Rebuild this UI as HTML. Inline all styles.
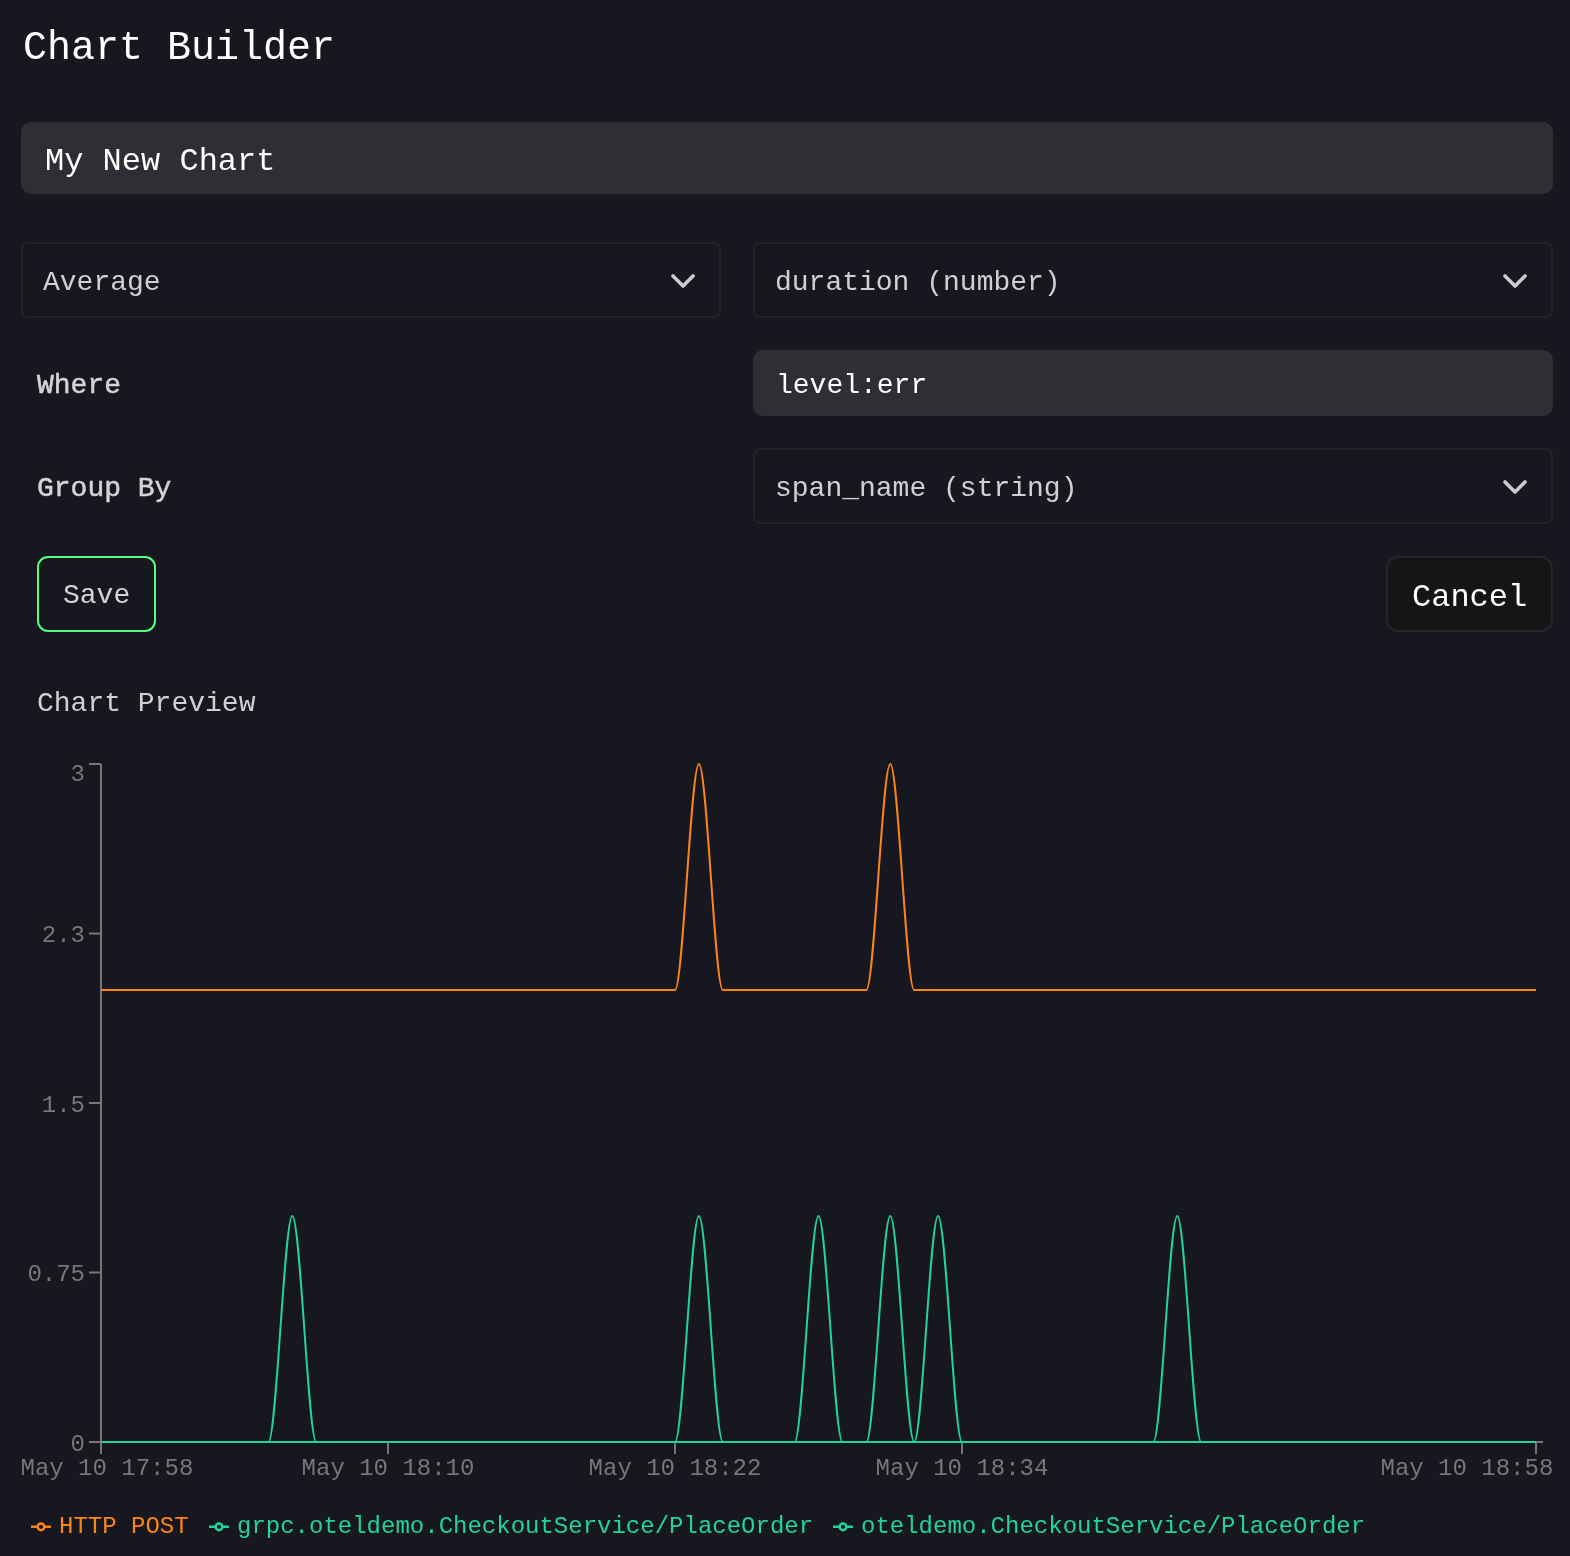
<!DOCTYPE html>
<html><head><meta charset="utf-8"><title>Chart Builder</title>
<style>
html,body{margin:0;padding:0;}
body{width:1570px;height:1556px;background:#17171f;position:relative;overflow:hidden;font-family:"Liberation Mono", monospace;}
</style></head><body>
<div style="position:absolute;left:22.5px;top:48.60px;font-size:40px;line-height:0;color:#ffffff;font-weight:normal;white-space:pre;will-change:transform;">Chart Builder</div>
<div style="position:absolute;left:21px;top:122px;width:1532px;height:72px;box-sizing:border-box;background:#2e2f34;border-radius:10px;"></div>
<div style="position:absolute;left:45px;top:161.52px;font-size:32px;line-height:0;color:#ffffff;font-weight:normal;white-space:pre;will-change:transform;">My New Chart</div>
<div style="position:absolute;left:21px;top:242px;width:700px;height:76px;box-sizing:border-box;border:2px solid #222327;border-radius:7px;"></div>
<div style="position:absolute;left:43px;top:282.58px;font-size:28px;line-height:0;color:#d0d0d0;font-weight:normal;white-space:pre;will-change:transform;">Average</div>
<svg style="position:absolute;left:671px;top:274px" width="24" height="14" viewBox="0 0 24 14"><path d="M2 2 L12 12 L22 2" fill="none" stroke="#cbcbcb" stroke-width="3.6" stroke-linecap="round" stroke-linejoin="round"/></svg>
<div style="position:absolute;left:753px;top:242px;width:800px;height:76px;box-sizing:border-box;border:2px solid #222327;border-radius:7px;"></div>
<div style="position:absolute;left:775px;top:282.58px;font-size:28px;line-height:0;color:#d0d0d0;font-weight:normal;white-space:pre;will-change:transform;">duration (number)</div>
<svg style="position:absolute;left:1503px;top:274px" width="24" height="14" viewBox="0 0 24 14"><path d="M2 2 L12 12 L22 2" fill="none" stroke="#cbcbcb" stroke-width="3.6" stroke-linecap="round" stroke-linejoin="round"/></svg>
<div style="position:absolute;left:37px;top:385.88px;font-size:28px;line-height:0;color:#d4d4d4;font-weight:normal;white-space:pre;will-change:transform;-webkit-text-stroke:0.5px #d4d4d4;">Where</div>
<div style="position:absolute;left:753px;top:350px;width:800px;height:66px;box-sizing:border-box;background:#2e2f34;border-radius:10px;"></div>
<div style="position:absolute;left:776px;top:385.88px;font-size:28px;line-height:0;color:#ffffff;font-weight:normal;white-space:pre;will-change:transform;">level:err</div>
<div style="position:absolute;left:37px;top:489.08px;font-size:28px;line-height:0;color:#d4d4d4;font-weight:normal;white-space:pre;will-change:transform;-webkit-text-stroke:0.5px #d4d4d4;">Group By</div>
<div style="position:absolute;left:753px;top:448px;width:800px;height:76px;box-sizing:border-box;border:2px solid #222327;border-radius:7px;"></div>
<div style="position:absolute;left:775px;top:489.08px;font-size:28px;line-height:0;color:#d0d0d0;font-weight:normal;white-space:pre;will-change:transform;">span_name (string)</div>
<svg style="position:absolute;left:1503px;top:480px" width="24" height="14" viewBox="0 0 24 14"><path d="M2 2 L12 12 L22 2" fill="none" stroke="#cbcbcb" stroke-width="3.6" stroke-linecap="round" stroke-linejoin="round"/></svg>
<div style="position:absolute;left:37px;top:556px;width:119px;height:76px;box-sizing:border-box;border:2px solid #55fe80;border-radius:11px;"></div>
<div style="position:absolute;left:63px;top:596.28px;font-size:28px;line-height:0;color:#d4d4d4;font-weight:normal;white-space:pre;will-change:transform;">Save</div>
<div style="position:absolute;left:1386px;top:556px;width:167px;height:76px;box-sizing:border-box;background:#151517;border:2px solid #262629;border-radius:12px;"></div>
<div style="position:absolute;left:1412px;top:597.72px;font-size:32px;line-height:0;color:#ffffff;font-weight:normal;white-space:pre;will-change:transform;">Cancel</div>
<div style="position:absolute;left:37px;top:703.58px;font-size:28px;line-height:0;color:#d0d0d0;font-weight:normal;white-space:pre;will-change:transform;">Chart Preview</div>
<svg style="position:absolute;left:0;top:0;will-change:transform" width="1570" height="1556" viewBox="0 0 1570 1556" font-family='"Liberation Mono", monospace'>
<line x1="101" y1="764" x2="101" y2="1442" stroke="#777777" stroke-width="2"/>
<line x1="101" y1="1442" x2="1543" y2="1442" stroke="#777777" stroke-width="2"/>
<line x1="89" y1="764" x2="101" y2="764" stroke="#777777" stroke-width="2"/>
<text x="85" y="781" text-anchor="end" font-size="24" fill="#777777">3</text>
<line x1="89" y1="933.5" x2="101" y2="933.5" stroke="#777777" stroke-width="2"/>
<text x="85" y="942.0" text-anchor="end" font-size="24" fill="#777777">2.3</text>
<line x1="89" y1="1103.0" x2="101" y2="1103.0" stroke="#777777" stroke-width="2"/>
<text x="85" y="1111.5" text-anchor="end" font-size="24" fill="#777777">1.5</text>
<line x1="89" y1="1272.5" x2="101" y2="1272.5" stroke="#777777" stroke-width="2"/>
<text x="85" y="1281.0" text-anchor="end" font-size="24" fill="#777777">0.75</text>
<line x1="89" y1="1442" x2="101" y2="1442" stroke="#777777" stroke-width="2"/>
<text x="85" y="1450.5" text-anchor="end" font-size="24" fill="#777777">0</text>
<line x1="101.0" y1="1442" x2="101.0" y2="1454" stroke="#777777" stroke-width="2"/>
<text x="20.5" y="1475" font-size="24" fill="#777777">May 10 17:58</text>
<line x1="388.0" y1="1442" x2="388.0" y2="1454" stroke="#777777" stroke-width="2"/>
<text x="388.0" y="1475" text-anchor="middle" font-size="24" fill="#777777">May 10 18:10</text>
<line x1="675.0" y1="1442" x2="675.0" y2="1454" stroke="#777777" stroke-width="2"/>
<text x="675.0" y="1475" text-anchor="middle" font-size="24" fill="#777777">May 10 18:22</text>
<line x1="962.0" y1="1442" x2="962.0" y2="1454" stroke="#777777" stroke-width="2"/>
<text x="962.0" y="1475" text-anchor="middle" font-size="24" fill="#777777">May 10 18:34</text>
<line x1="1536.0" y1="1442" x2="1536.0" y2="1454" stroke="#777777" stroke-width="2"/>
<text x="1380.5" y="1475" font-size="24" fill="#777777">May 10 18:58</text>
<line x1="101" y1="1442" x2="1536" y2="1442" stroke="#20d49c" stroke-width="2"/>
<path d="M101.00,1442.00L124.92,1442.00L148.83,1442.00L172.75,1442.00L196.67,1442.00L220.58,1442.00L244.50,1442.00L268.42,1442.00C276.39,1442.00 284.36,1216.00 292.33,1216.00C300.31,1216.00 308.28,1442.00 316.25,1442.00L340.17,1442.00L364.08,1442.00L388.00,1442.00L411.92,1442.00L435.83,1442.00L459.75,1442.00L483.67,1442.00L507.58,1442.00L531.50,1442.00L555.42,1442.00L579.33,1442.00L603.25,1442.00L627.17,1442.00L651.08,1442.00L675.00,1442.00C682.97,1442.00 690.94,1216.00 698.92,1216.00C706.89,1216.00 714.86,1442.00 722.83,1442.00L746.75,1442.00L770.67,1442.00L794.58,1442.00C802.56,1442.00 810.53,1216.00 818.50,1216.00C826.47,1216.00 834.44,1442.00 842.42,1442.00L866.33,1442.00C874.31,1442.00 882.28,1216.00 890.25,1216.00C898.22,1216.00 906.19,1442.00 914.17,1442.00C922.14,1442.00 930.11,1216.00 938.08,1216.00C946.06,1216.00 954.03,1442.00 962.00,1442.00L985.92,1442.00L1009.83,1442.00L1033.75,1442.00L1057.67,1442.00L1081.58,1442.00L1105.50,1442.00L1129.42,1442.00L1153.33,1442.00C1161.31,1442.00 1169.28,1216.00 1177.25,1216.00C1185.22,1216.00 1193.19,1442.00 1201.17,1442.00L1225.08,1442.00L1249.00,1442.00L1272.92,1442.00L1296.83,1442.00L1320.75,1442.00L1344.67,1442.00L1368.58,1442.00L1392.50,1442.00L1416.42,1442.00L1440.33,1442.00L1464.25,1442.00L1488.17,1442.00L1512.08,1442.00L1536.00,1442.00" fill="none" stroke="#20d49c" stroke-width="2"/>
<path d="M101.00,990.00L124.92,990.00L148.83,990.00L172.75,990.00L196.67,990.00L220.58,990.00L244.50,990.00L268.42,990.00L292.33,990.00L316.25,990.00L340.17,990.00L364.08,990.00L388.00,990.00L411.92,990.00L435.83,990.00L459.75,990.00L483.67,990.00L507.58,990.00L531.50,990.00L555.42,990.00L579.33,990.00L603.25,990.00L627.17,990.00L651.08,990.00L675.00,990.00C682.97,990.00 690.94,764.00 698.92,764.00C706.89,764.00 714.86,990.00 722.83,990.00L746.75,990.00L770.67,990.00L794.58,990.00L818.50,990.00L842.42,990.00L866.33,990.00C874.31,990.00 882.28,764.00 890.25,764.00C898.22,764.00 906.19,990.00 914.17,990.00L938.08,990.00L962.00,990.00L985.92,990.00L1009.83,990.00L1033.75,990.00L1057.67,990.00L1081.58,990.00L1105.50,990.00L1129.42,990.00L1153.33,990.00L1177.25,990.00L1201.17,990.00L1225.08,990.00L1249.00,990.00L1272.92,990.00L1296.83,990.00L1320.75,990.00L1344.67,990.00L1368.58,990.00L1392.50,990.00L1416.42,990.00L1440.33,990.00L1464.25,990.00L1488.17,990.00L1512.08,990.00L1536.00,990.00" fill="none" stroke="#fd8516" stroke-width="2"/>
<svg x="31" y="1516.8" width="20" height="20" viewBox="0 0 32 32"><path stroke-width="4" fill="none" stroke="#fd8516" d="M0,16h10.667A5.333,5.333,0,1,1,21.333,16H32M21.333,16A5.333,5.333,0,1,1,10.667,16"/></svg>
<text x="59" y="1533" font-size="24" fill="#fd8516">HTTP POST</text>
<svg x="209" y="1516.8" width="20" height="20" viewBox="0 0 32 32"><path stroke-width="4" fill="none" stroke="#20d49c" d="M0,16h10.667A5.333,5.333,0,1,1,21.333,16H32M21.333,16A5.333,5.333,0,1,1,10.667,16"/></svg>
<text x="237" y="1533" font-size="24" fill="#20d49c">grpc.oteldemo.CheckoutService/PlaceOrder</text>
<svg x="833" y="1516.8" width="20" height="20" viewBox="0 0 32 32"><path stroke-width="4" fill="none" stroke="#20d49c" d="M0,16h10.667A5.333,5.333,0,1,1,21.333,16H32M21.333,16A5.333,5.333,0,1,1,10.667,16"/></svg>
<text x="861" y="1533" font-size="24" fill="#20d49c">oteldemo.CheckoutService/PlaceOrder</text>
</svg>
</body></html>
